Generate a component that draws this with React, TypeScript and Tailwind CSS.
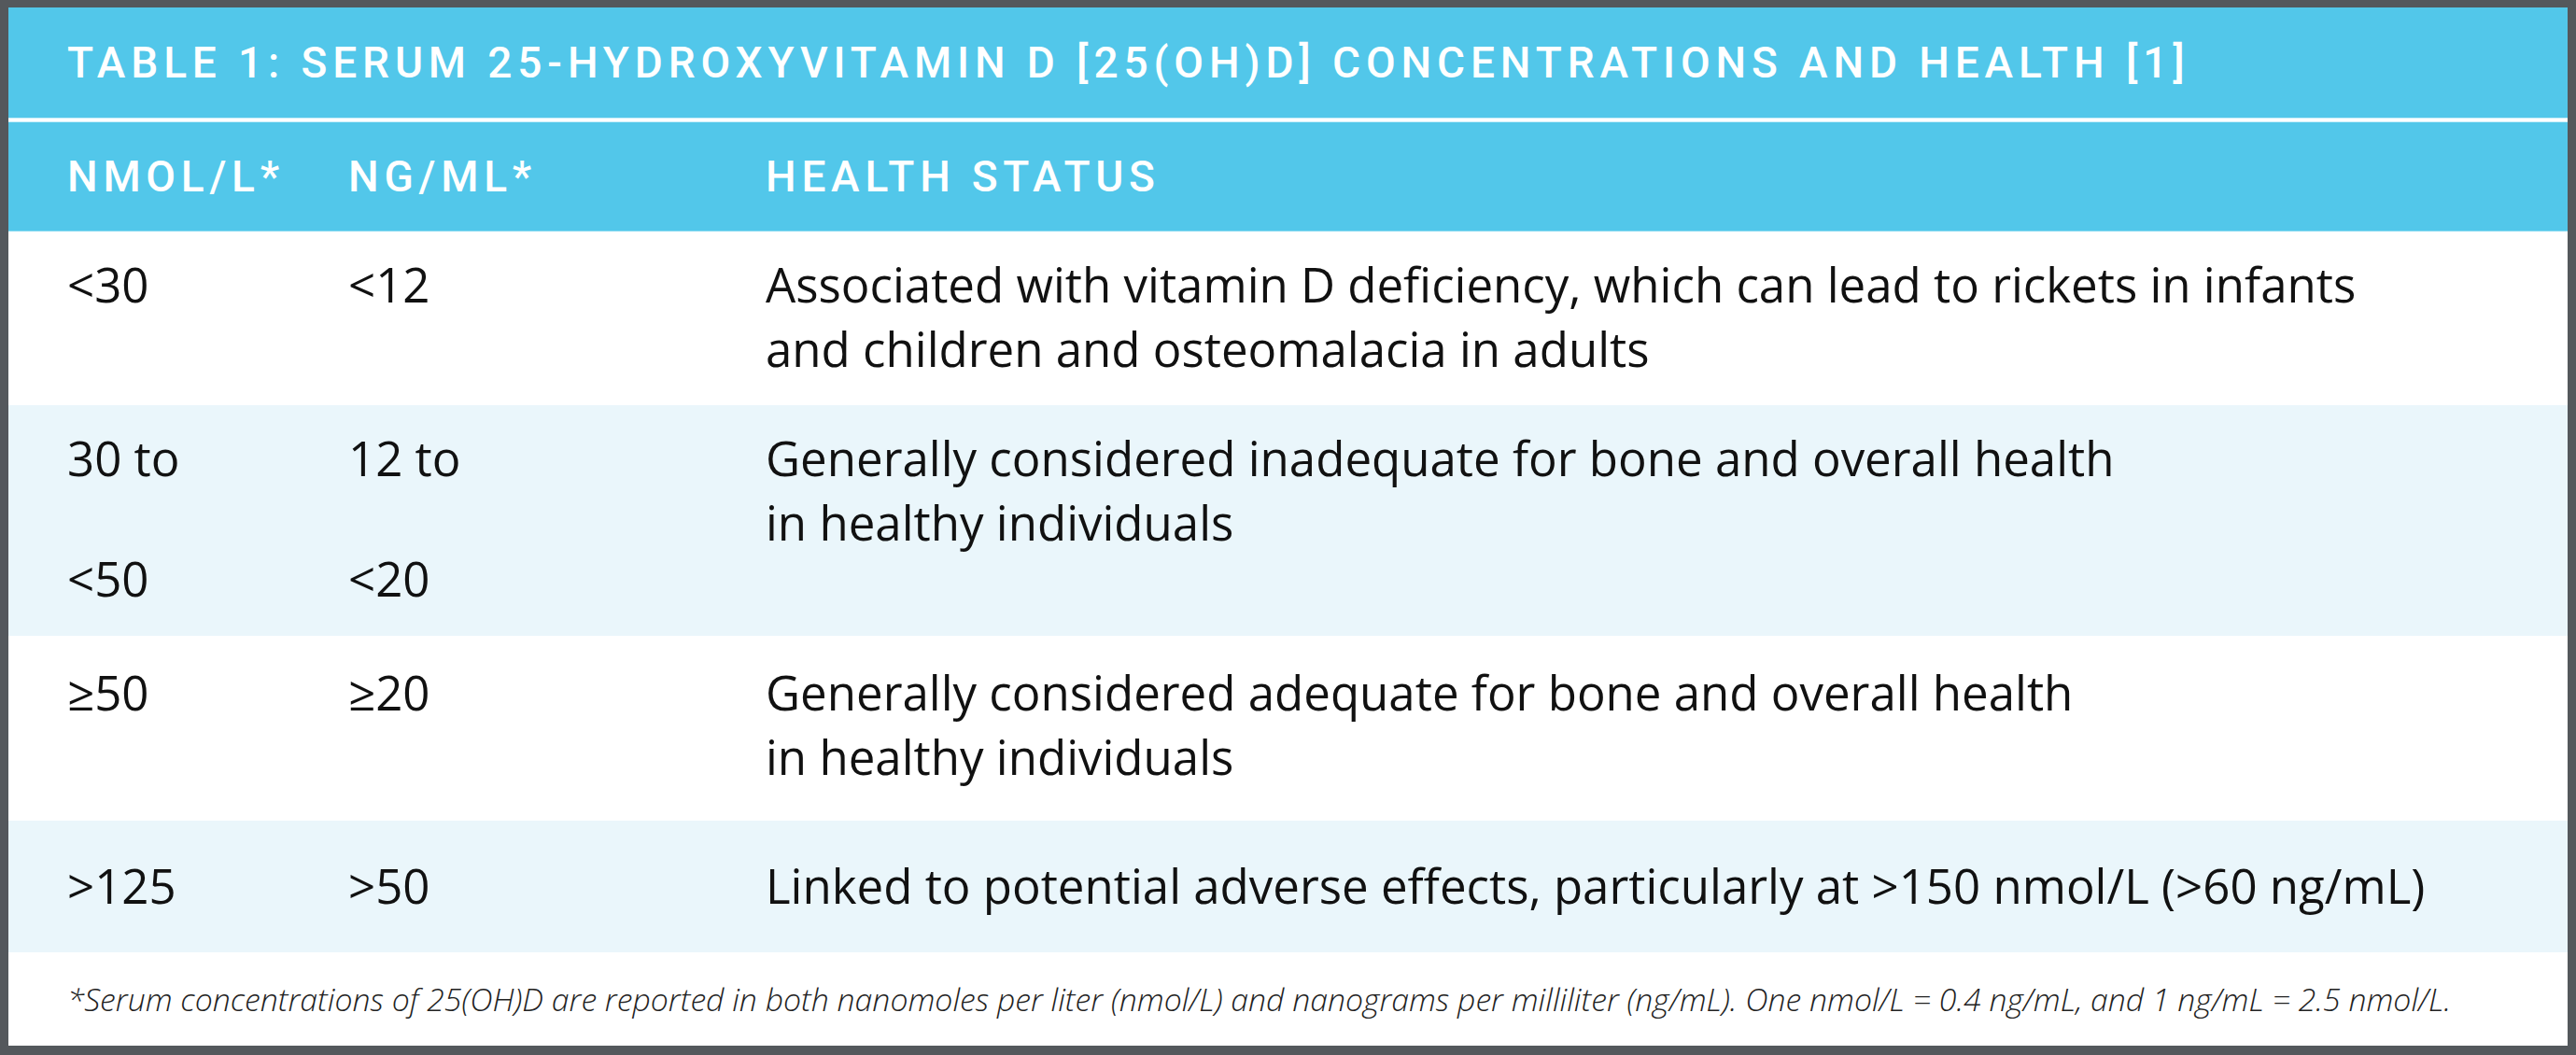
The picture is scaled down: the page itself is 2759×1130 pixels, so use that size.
const ROWS = [
  {
    nmol: ['<30'],
    ng: ['<12'],
    status: ['Associated with vitamin D deficiency, which can lead to rickets in infants', 'and children and osteomalacia in adults'],
    bg: 'bg-white',
    pad: 'pt-[22px] pb-[26px]',
  },
  {
    nmol: ['30 to', '<50'],
    ng: ['12 to', '<20'],
    status: ['Generally considered inadequate for bone and overall health', 'in healthy individuals'],
    bg: 'bg-[#eaf6fb]',
    pad: 'pt-[22px] pb-[27px]',
  },
  {
    nmol: ['≥50'],
    ng: ['≥20'],
    status: ['Generally considered adequate for bone and overall health', 'in healthy individuals'],
    bg: 'bg-white',
    pad: 'pt-[26px] pb-[34px]',
  },
  {
    nmol: ['>125'],
    ng: ['>50'],
    status: ['Linked to potential adverse effects, particularly at >150 nmol/L (>60 ng/mL)'],
    bg: 'bg-[#eaf6fb]',
    pad: 'pt-[35px] pb-[37px]',
  },
];

const headFont = { fontFamily: 'Roboto, "Liberation Sans", sans-serif' };
const bodyFont = { fontFamily: '"Open Sans", "Liberation Sans", sans-serif' };

function Stack({ lines }: { lines: string[] }) {
  return (
    <div className="flex flex-col gap-[60px]">
      {lines.map((l) => (
        <div key={l} className="whitespace-nowrap">{l}</div>
      ))}
    </div>
  );
}

export default function App() {
  return (
    <div className="w-[2759px] h-[1130px] bg-[#54585c] pt-[8px] pl-[9px] pr-[9px] pb-[10px]">
      <div className="w-full h-full flex flex-col bg-white">
        {/* title band */}
        <div
          className="h-[118px] shrink-0 bg-[#52c7ea] flex items-center pl-[63px] text-white text-[46px] font-medium uppercase tracking-[0.128em] whitespace-nowrap"
          style={headFont}
        >
          Table 1: Serum 25-Hydroxyvitamin D [25(OH)D] Concentrations and Health [1]
        </div>
        <div className="h-[5px] shrink-0 bg-white border-y border-[#c8eefa]" />
        {/* column headings */}
        <div
          className="h-[117px] shrink-0 bg-[#52c7ea] border-b border-[#8fdcf2] grid grid-cols-[301px_447px_1fr] items-center pl-[63px] text-white text-[46px] font-medium uppercase tracking-[0.125em] whitespace-nowrap"
          style={headFont}
        >
          <div>nmol/L*</div>
          <div>ng/mL*</div>
          <div>Health Status</div>
        </div>

        {ROWS.map((r, i) => (
          <div
            key={i}
            className={`grid grid-cols-[301px_447px_1fr] pl-[63px] text-[51px] leading-[69px] text-[#111] ${r.bg} ${r.pad}`}
            style={bodyFont}
          >
            <Stack lines={r.nmol} />
            <Stack lines={r.ng} />
            <div>
              {r.status.map((l) => (
                <div key={l} className="whitespace-nowrap">{l}</div>
              ))}
            </div>
          </div>
        ))}

        {/* footnote */}
        <div
          className="flex-1 flex items-center pl-[63px] text-[33.8px] italic font-light text-[#222] whitespace-nowrap"
          style={bodyFont}
        >
          *Serum concentrations of 25(OH)D are reported in both nanomoles per liter (nmol/L) and nanograms per milliliter (ng/mL). One nmol/L = 0.4 ng/mL, and 1 ng/mL = 2.5 nmol/L.
        </div>
      </div>
    </div>
  );
}
